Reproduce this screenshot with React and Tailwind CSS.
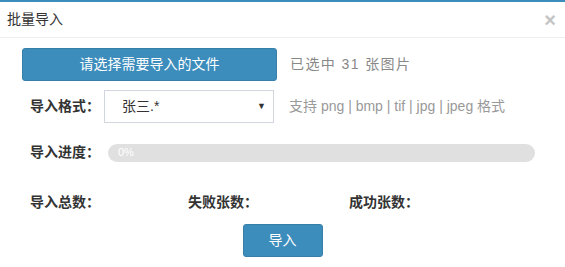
import React from "react";

const cjk = { fontFamily: '"Liberation Sans", "Noto Sans CJK SC", sans-serif' };

const App = () => {
  return (
    <div className="w-[565px] h-[267px] bg-white border-t-2 border-[#3c8dbc] text-[#333]" style={cjk}>
      {/* Header */}
      <div className="h-[36px] flex items-center justify-between pl-[7px] pr-[9px] border-b border-[#eeeeee]">
        <span className="text-[14px]">批量导入</span>
        <span className="text-[20px] leading-none text-[#c4c4c4] font-bold">×</span>
      </div>

      {/* Body */}
      <div className="pt-[10px]">
        <div className="flex items-center">
          <button className="ml-[22px] w-[255px] h-[33px] rounded-[3px] bg-[#3c8dbc] border border-[#367fa9] text-white text-[14px]">
            请选择需要导入的文件
          </button>
          <span className="ml-[13px] text-[14px] text-[#888] tracking-[1.4px]">已选中 31 张图片</span>
        </div>

        <div className="flex items-center mt-[9px]">
          <span className="ml-[30px] w-[74px] text-[14px] font-bold">导入格式：</span>
          <div className="w-[170px] h-[33px] border border-[#d2d6de] flex items-center justify-between pl-[17px] pr-[7px]">
            <span className="text-[14px]">张三.*</span>
            <span className="text-[9px] text-[#333]">▼</span>
          </div>
          <span className="ml-[15px] text-[14px] text-[#999]">支持 png | bmp | tif | jpg | jpeg 格式</span>
        </div>

        <div className="flex items-center mt-[19px]">
          <span className="ml-[30px] w-[78px] text-[14px] font-bold">导入进度：</span>
          <div className="w-[427px] h-[18px] rounded-full bg-[#e0e0e0] flex items-center pl-[10px]">
            <span className="text-[11px] text-white">0%</span>
          </div>
        </div>

        <div className="flex items-center mt-[29px] text-[14px] font-bold">
          <span className="ml-[30px] w-[158px]">导入总数：</span>
          <span className="w-[161px]">失败张数：</span>
          <span>成功张数：</span>
        </div>

        <div className="flex justify-center mt-[11px]">
          <button className="w-[80px] h-[33px] rounded-[3px] bg-[#3c8dbc] border border-[#367fa9] text-white text-[14px]">
            导入
          </button>
        </div>
      </div>
    </div>
  );
};

export default App;
